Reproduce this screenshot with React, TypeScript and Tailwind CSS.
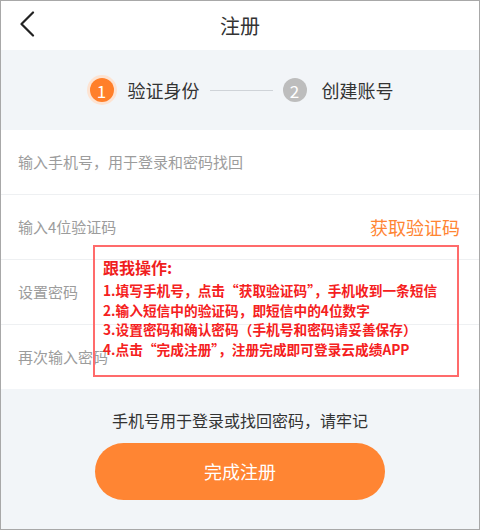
const font = { fontFamily: '"Noto Sans CJK SC", "Noto Sans", sans-serif' };

function Row({ label, right }: { label: string; right?: string }) {
  return (
    <div className="h-[64px] flex items-center justify-between pl-[17px] pr-[19px] bg-white">
      <span className="text-[15px] text-[#9c9c9c]">{label}</span>
      {right && <span className="text-[18px] text-[#ff8533]">{right}</span>}
    </div>
  );
}

export default function App() {
  const steps = [
    '1.填写手机号，点击“获取验证码”，手机收到一条短信',
    '2.输入短信中的验证码，即短信中的4位数字',
    '3.设置密码和确认密码（手机号和密码请妥善保存）',
    '4.点击“完成注册”，注册完成即可登录云成绩APP',
  ];

  return (
    <div style={font} className="w-[480px] h-[530px] border border-[#a8a8a8] bg-[#f2f5f8] flex flex-col relative overflow-hidden">
      {/* header */}
      <div className="h-[49px] bg-white flex items-center relative shrink-0">
        <svg className="absolute left-[18px] top-[10px]" width="16" height="26" viewBox="0 0 16 26" fill="none">
          <path d="M14 1.5 L2.5 13 L14 24.5" stroke="#222" strokeWidth="2.2" strokeLinecap="round" strokeLinejoin="round" />
        </svg>
        <div className="w-full text-center text-[20px] text-[#333]">注册</div>
      </div>

      {/* steps */}
      <div className="h-[80px] flex items-center justify-center shrink-0">
        <div className="w-[30px] h-[30px] rounded-full bg-[#fde3d2] flex items-center justify-center">
          <div className="w-[24px] h-[24px] rounded-full bg-[#ff7f2a] text-white text-[17px] leading-none flex items-center justify-center">1</div>
        </div>
        <span className="ml-[11px] text-[18px] text-[#333]">验证身份</span>
        <div className="mx-[10px] w-[63px] h-px bg-[#cfd3d8]" />
        <div className="w-[24px] h-[24px] rounded-full bg-[#bdbdbd] text-white text-[17px] leading-none flex items-center justify-center">2</div>
        <span className="ml-[15px] text-[18px] text-[#333]">创建账号</span>
      </div>

      {/* form */}
      <div className="flex flex-col gap-px bg-[#eef0f2] shrink-0">
        <Row label="输入手机号，用于登录和密码找回" />
        <Row label="输入4位验证码" right="获取验证码" />
        <Row label="设置密码" />
        <Row label="再次输入密码" />
      </div>

      {/* notice + button */}
      <div className="flex flex-col items-center pt-[19px]">
        <p className="text-[16px] text-[#333] leading-[24px]">手机号用于登录或找回密码，请牢记</p>
        <button className="mt-[11px] w-[290px] h-[57px] rounded-full bg-[#ff8533] text-white text-[18px]">完成注册</button>
      </div>

      {/* overlay hint box */}
      <div className="absolute left-[92px] top-[244px] w-[366px] h-[132px] border-2 border-[#ff6b6b] px-[8px] pt-[9px]">
        <div className="text-[16px] font-bold text-[#f01e1e] leading-[22px]">跟我操作:</div>
        <div className="mt-[3px] flex flex-col">
          {steps.map((s) => (
            <div key={s} className="text-[13.7px] font-bold text-[#f52020] leading-[19.5px] whitespace-nowrap">{s}</div>
          ))}
        </div>
      </div>
    </div>
  );
}
